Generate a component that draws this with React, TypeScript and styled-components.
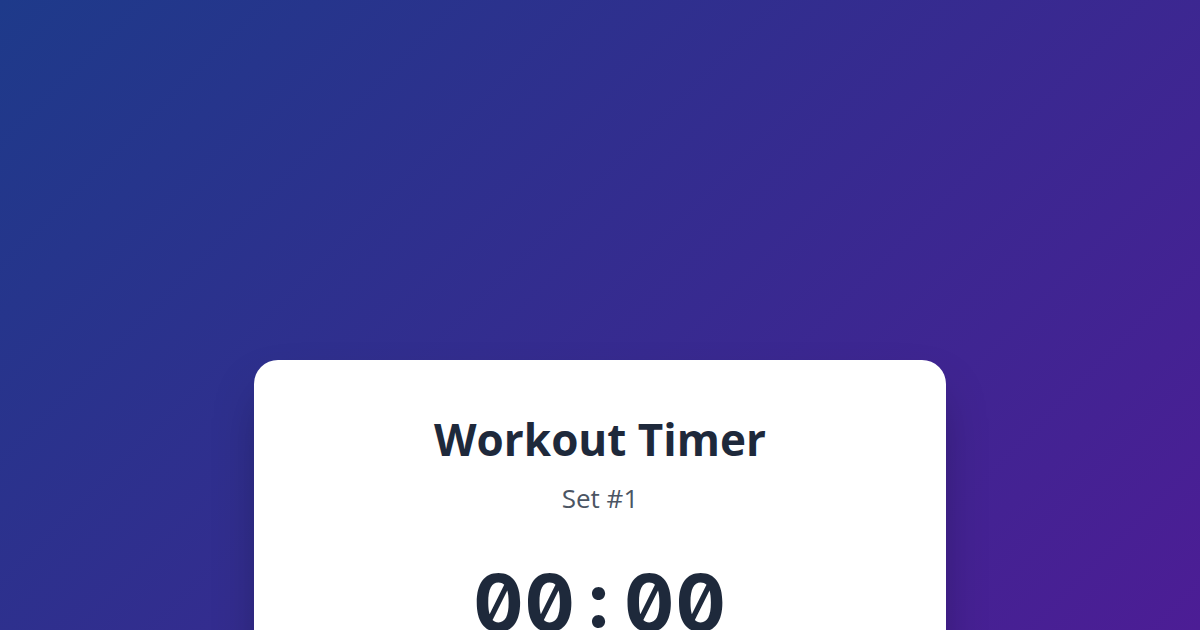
import React from 'react';
import styled, { createGlobalStyle } from 'styled-components'

const GlobalStyle = createGlobalStyle`
  html, body {
    margin: 0;
    padding: 0;
  }
  body {
    min-height: 100vh;
    background: linear-gradient(135deg, #1e3a8a 0%, #4c1d95 100%);
    background-attachment: fixed;
    font-family: "Open Sans", "Noto Sans", sans-serif;
  }
`

const Page = styled.div`
  display: flex;
  justify-content: center;
  padding: 360px 16px 48px;
`
const Card = styled.div`
  width: 692px;
  box-sizing: border-box;
  background: #ffffff;
  border-radius: 24px;
  padding: 53px 40px 48px;
  box-shadow: 0 25px 50px -12px rgba(0, 0, 0, 0.35);
  display: flex;
  flex-direction: column;
  align-items: center;
`
const Title = styled.h1`
  margin: 0;
  font-size: 44px;
  font-weight: 700;
  color: #1e293b;
  line-height: 1.2;
`
const SetLabel = styled.p`
  margin: 16px 0 0;
  font-size: 26px;
  color: #4b5563;
  line-height: 1.3;
`
const TimeDisplay = styled.div`
  margin-top: 48px;
  display: flex;
  align-items: center;
  font-family: "Inter", sans-serif;
  font-variant-numeric: slashed-zero tabular-nums;
  font-size: 78px;
  font-weight: 700;
  color: #1e293b;
  line-height: 1;
  letter-spacing: 1px;
`
const Colon = styled.span`
  margin: 0 14px 0 12px;
  position: relative;
  top: -4px;
`

const WorkoutTimer = () => {
  const minutes = '00'
  const seconds = '00'

  return (
    <Page>
      <Card>
        <Title>Workout Timer</Title>
        <SetLabel>Set #1</SetLabel>
        <TimeDisplay>
          <span>{minutes}</span>
          <Colon>:</Colon>
          <span>{seconds}</span>
        </TimeDisplay>
      </Card>
    </Page>
  );
};

const App = () => (
  <>
    <GlobalStyle />
    <WorkoutTimer />
  </>
)

export default App;
